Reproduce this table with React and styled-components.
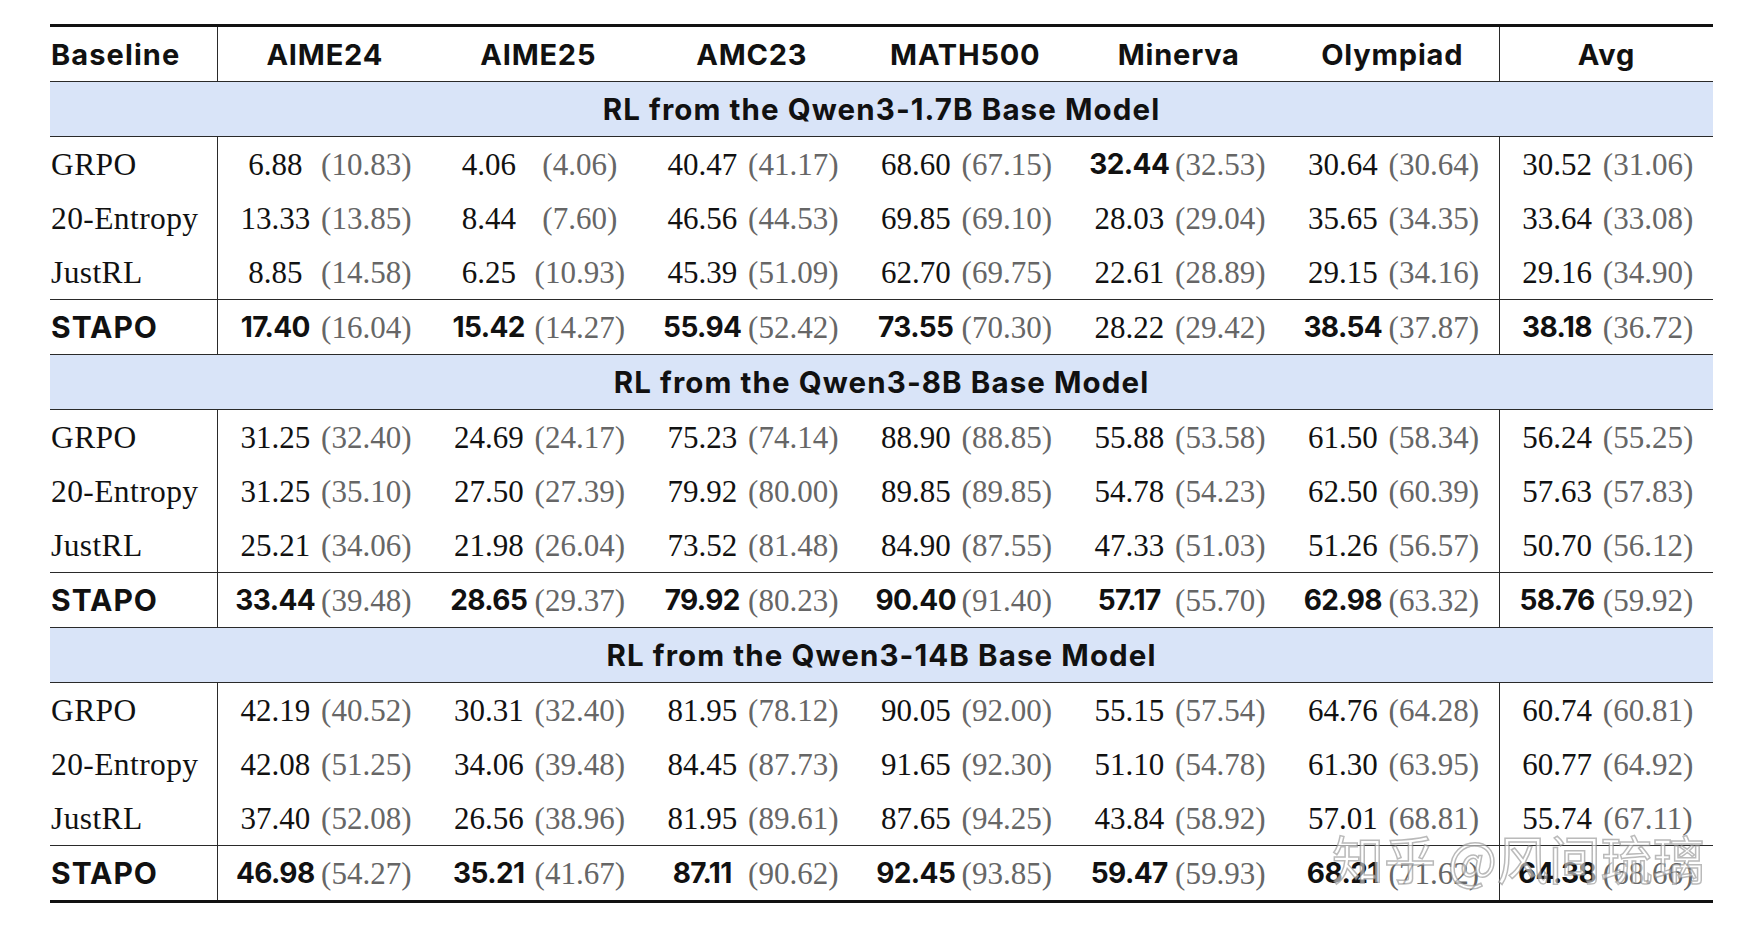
import React from "react";
import styled, { createGlobalStyle } from "styled-components";

const GlobalStyle = createGlobalStyle`
  * { box-sizing: border-box; }
  body {
    margin: 0;
    background: #ffffff;
  }
`;

const colors = {
  ink: "#111111",
  rule: "#2a2a2a",
  muted: "#666666",
  band: "#d9e4f8",
};

const sans = `"Inter", "Noto Sans", sans-serif`;
const serif = `"Liberation Serif", "DejaVu Serif", serif`;

const sections = [
  {
    title: "RL from the Qwen3-1.7B Base Model",
    rows: [
      ["GRPO", ["6.88", "10.83"], ["4.06", "4.06"], ["40.47", "41.17"], ["68.60", "67.15"], ["*32.44", "32.53"], ["30.64", "30.64"], ["30.52", "31.06"]],
      ["20-Entropy", ["13.33", "13.85"], ["8.44", "7.60"], ["46.56", "44.53"], ["69.85", "69.10"], ["28.03", "29.04"], ["35.65", "34.35"], ["33.64", "33.08"]],
      ["JustRL", ["8.85", "14.58"], ["6.25", "10.93"], ["45.39", "51.09"], ["62.70", "69.75"], ["22.61", "28.89"], ["29.15", "34.16"], ["29.16", "34.90"]],
      ["STAPO", ["*17.40", "16.04"], ["*15.42", "14.27"], ["*55.94", "52.42"], ["*73.55", "70.30"], ["28.22", "29.42"], ["*38.54", "37.87"], ["*38.18", "36.72"]],
    ],
  },
  {
    title: "RL from the Qwen3-8B Base Model",
    rows: [
      ["GRPO", ["31.25", "32.40"], ["24.69", "24.17"], ["75.23", "74.14"], ["88.90", "88.85"], ["55.88", "53.58"], ["61.50", "58.34"], ["56.24", "55.25"]],
      ["20-Entropy", ["31.25", "35.10"], ["27.50", "27.39"], ["79.92", "80.00"], ["89.85", "89.85"], ["54.78", "54.23"], ["62.50", "60.39"], ["57.63", "57.83"]],
      ["JustRL", ["25.21", "34.06"], ["21.98", "26.04"], ["73.52", "81.48"], ["84.90", "87.55"], ["47.33", "51.03"], ["51.26", "56.57"], ["50.70", "56.12"]],
      ["STAPO", ["*33.44", "39.48"], ["*28.65", "29.37"], ["*79.92", "80.23"], ["*90.40", "91.40"], ["*57.17", "55.70"], ["*62.98", "63.32"], ["*58.76", "59.92"]],
    ],
  },
  {
    title: "RL from the Qwen3-14B Base Model",
    rows: [
      ["GRPO", ["42.19", "40.52"], ["30.31", "32.40"], ["81.95", "78.12"], ["90.05", "92.00"], ["55.15", "57.54"], ["64.76", "64.28"], ["60.74", "60.81"]],
      ["20-Entropy", ["42.08", "51.25"], ["34.06", "39.48"], ["84.45", "87.73"], ["91.65", "92.30"], ["51.10", "54.78"], ["61.30", "63.95"], ["60.77", "64.92"]],
      ["JustRL", ["37.40", "52.08"], ["26.56", "38.96"], ["81.95", "89.61"], ["87.65", "94.25"], ["43.84", "58.92"], ["57.01", "68.81"], ["55.74", "67.11"]],
      ["STAPO", ["*46.98", "54.27"], ["*35.21", "41.67"], ["*87.11", "90.62"], ["*92.45", "93.85"], ["*59.47", "59.93"], ["*68.21", "71.62"], ["*64.38", "68.66"]],
    ],
  },
];

const headers = ["AIME24", "AIME25", "AMC23", "MATH500", "Minerva", "Olympiad"];

const Page = styled.div`
  position: relative;
  padding: 24px 0 0 50px;
  height: 926px;
`;

const Table = styled.div`
  width: 1663px;
  border-top: 3px solid ${colors.ink};
  border-bottom: 3px solid ${colors.ink};
`;

const Row = styled.div`
  display: grid;
  grid-template-columns: 168px repeat(6, 213.5px) 214px;
  height: ${(p) => p.$h}px;
  border-top: ${(p) => (p.$ruled ? `1px solid ${colors.rule}` : "none")};
`;

const LabelCell = styled.div`
  display: flex;
  align-items: center;
  padding-left: 1px;
  border-right: 1px solid ${colors.rule};
  color: ${colors.ink};
  white-space: nowrap;
  font-family: ${(p) => (p.$bold ? sans : serif)};
  font-weight: ${(p) => (p.$bold ? 700 : 400)};
  font-size: ${(p) => (p.$bold ? 30 : 31.5)}px;
  letter-spacing: ${(p) => (p.$bold ? "1px" : "0.4px")};
  padding-top: ${(p) => (p.$bold ? 0 : 2)}px;
`;

const HeadCell = styled.div`
  display: flex;
  align-items: center;
  justify-content: ${(p) => (p.$left ? "flex-start" : "center")};
  padding-left: ${(p) => (p.$left ? 1 : 0)}px;
  border-right: ${(p) => (p.$divider === "right" ? `1px solid ${colors.rule}` : "none")};
  border-left: ${(p) => (p.$divider === "left" ? `1px solid ${colors.rule}` : "none")};
  font-family: ${sans};
  font-weight: 700;
  font-size: 29px;
  letter-spacing: ${(p) => (p.$left ? "1.1px" : "0.8px")};
  white-space: nowrap;
  color: ${colors.ink};
`;

const ValueCell = styled.div`
  display: flex;
  align-items: center;
  justify-content: center;
  gap: 4px;
  padding-right: 3px;
  padding-top: 2px;
  border-left: ${(p) => (p.$divider ? `1px solid ${colors.rule}` : "none")};
`;

const Main = styled.span`
  width: 82px;
  text-align: center;
  white-space: nowrap;
  color: ${colors.ink};
  font-family: ${(p) => (p.$bold ? sans : serif)};
  font-weight: ${(p) => (p.$bold ? 700 : 400)};
  font-size: ${(p) => (p.$bold ? 28 : 31)}px;
  letter-spacing: ${(p) => (p.$bold ? "-0.6px" : "0")};
  margin-top: ${(p) => (p.$bold ? -2 : 0)}px;
`;

const Paren = styled.span`
  width: 92px;
  text-align: center;
  white-space: nowrap;
  color: ${colors.muted};
  font-family: ${serif};
  font-size: 31px;
`;

const Band = styled.div`
  display: flex;
  align-items: center;
  justify-content: center;
  height: 56px;
  background: ${colors.band};
  border-top: 1px solid ${colors.rule};
  border-bottom: 1px solid ${colors.rule};
  font-family: ${sans};
  font-weight: 700;
  font-size: 29.5px;
  letter-spacing: 1.1px;
  white-space: nowrap;
  color: ${colors.ink};
`;

const Watermark = styled.div`
  position: absolute;
  left: 1332px;
  top: 832px;
  font-family: "Noto Sans CJK SC", sans-serif;
  font-size: 52px;
  line-height: 1;
  white-space: nowrap;
  color: rgba(255, 255, 255, 0.55);
  -webkit-text-stroke: 1.5px rgba(130, 130, 130, 0.55);
  pointer-events: none;
`;

function Value({ pair, divider }) {
  const bold = pair[0].startsWith("*");
  const main = bold ? pair[0].slice(1) : pair[0];
  return (
    <ValueCell $divider={divider}>
      <Main $bold={bold}>{main}</Main>
      <Paren>({pair[1]})</Paren>
    </ValueCell>
  );
}

function Section({ section }) {
  return (
    <>
      <Band>{section.title}</Band>
      {section.rows.map((row) => {
        const [name, ...vals] = row;
        const ours = name === "STAPO";
        return (
          <Row key={name} $h={ours ? 55 : 54} $ruled={ours}>
            <LabelCell $bold={ours}>{name}</LabelCell>
            {vals.map((pair, i) => (
              <Value key={i} pair={pair} divider={i === vals.length - 1} />
            ))}
          </Row>
        );
      })}
    </>
  );
}

export default function App() {
  return (
    <>
      <GlobalStyle />
      <Page>
        <Table>
          <Row $h={54}>
            <HeadCell $left $divider="right">Baseline</HeadCell>
            {headers.map((h) => (
              <HeadCell key={h}>{h}</HeadCell>
            ))}
            <HeadCell $divider="left">Avg</HeadCell>
          </Row>
          {sections.map((s) => (
            <Section key={s.title} section={s} />
          ))}
        </Table>
        <Watermark>知乎 @风间琉璃</Watermark>
      </Page>
    </>
  );
}
